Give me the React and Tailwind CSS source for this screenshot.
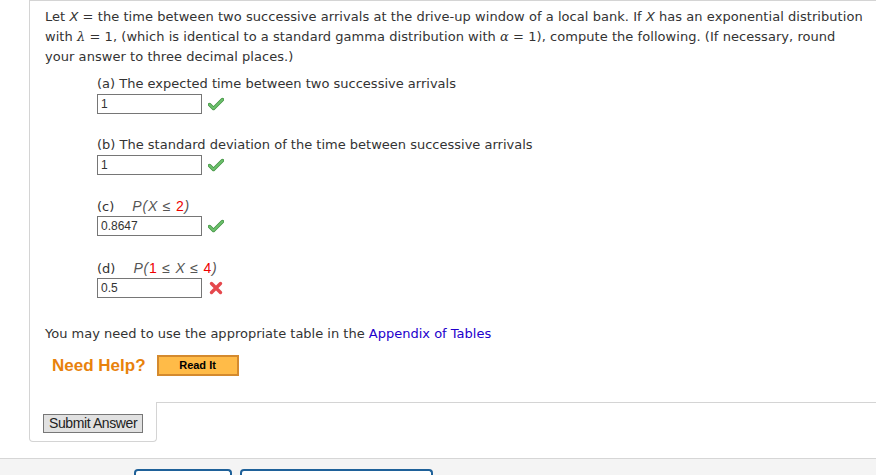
import React from 'react';

const Check = () => (
    <svg width="16" height="14" viewBox="0 0 16 14" className="ml-[6px]">
        <path d="M1.5 7.5 L5.5 11.5 L14.5 2.5" fill="none" stroke="#3f8f3f" strokeWidth="3.4" strokeLinecap="round" strokeLinejoin="round" />
        <path d="M1.5 7.5 L5.5 11.5 L14.5 2.5" fill="none" stroke="#6cc06c" strokeWidth="2" strokeLinecap="round" strokeLinejoin="round" />
    </svg>
);

const Cross = () => (
    <svg width="14" height="14" viewBox="0 0 14 14" className="ml-[7px]">
        <path d="M2.5 2.5 L11.5 11.5 M11.5 2.5 L2.5 11.5" stroke="#e5484d" strokeWidth="3.4" strokeLinecap="round" />
    </svg>
);

const Answer = ({ value, ok }) => (
    <div className="flex items-center h-[20px]">
        <div className="w-[105px] h-[20px] border border-[#767676] bg-white px-[3px] text-[12px] leading-[18px] text-[#333] font-['Liberation_Sans',Arial,sans-serif]">
            {value}
        </div>
        {ok ? <Check /> : <Cross />}
    </div>
);

const Label = ({ children }) => (
    <div className="h-[20px] leading-[20px]">{children}</div>
);

const Prob = ({ children }) => (
    <span className="ml-[18px] italic font-['Liberation_Sans',Arial,sans-serif] text-[14px] tracking-[0.8px] text-[#555]">{children}</span>
);

export default function App() {
    return (
        <div className="w-[876px] h-[475px] bg-white flex flex-col overflow-hidden font-['DejaVu_Sans',Verdana,sans-serif] text-[13px] text-[#333]">
            <div className="flex flex-1">
                <div className="flex-1 flex flex-col pl-[29px]">
                    <div className="h-[402px] border-l border-t border-[#d4d4d4] pt-[6px] pl-[15px]">
                        <p className="leading-[20px] pr-[6px] tracking-[0.05px]">
                            Let <i>X</i> = the time between two successive arrivals at the drive-up window of a local bank. If <i>X</i> has an exponential distribution<br />
                            with <i className="font-['DejaVu_Serif',serif]">λ</i> = 1, (which is identical to a standard gamma distribution with <i className="font-['DejaVu_Serif',serif]">α</i> = 1), compute the following. (If necessary, round<br />
                            your answer to three decimal places.)
                        </p>
                        <div className="ml-[52px] mt-[7px] flex flex-col">
                            <Label>(a) The expected time between two successive arrivals</Label>
                            <Answer value="1" ok />
                            <div className="mt-[21px]"><Label>(b) The standard deviation of the time between successive arrivals</Label></div>
                            <Answer value="1" ok />
                            <div className="mt-[21px]"><Label>(c)<Prob>P(X ≤ <span className="not-italic text-[#e00]">2</span>)</Prob></Label></div>
                            <Answer value="0.8647" ok />
                            <div className="mt-[22px]"><Label>(d)<Prob>P(<span className="not-italic text-[#e00]">1</span> ≤ X ≤ <span className="not-italic text-[#e00]">4</span>)</Prob></Label></div>
                            <Answer value="0.5" ok={false} />
                        </div>
                        <p className="mt-[26px] leading-[20px]">
                            You may need to use the appropriate table in the <span className="text-[#2200cc]">Appendix of Tables</span>
                        </p>
                        <div className="mt-[9px] ml-[7px] flex items-center">
                            <span className="font-['Liberation_Sans',Arial,sans-serif] font-bold text-[17px] text-[#e8820c]">Need Help?</span>
                            <button className="ml-[11px] w-[82px] h-[21px] bg-[#ffbb48] border-2 border-[#d48a2e] font-['Liberation_Sans',Arial,sans-serif] font-bold text-[11px] text-black leading-[17px]">
                                Read It
                            </button>
                        </div>
                    </div>
                    <div className="flex h-[40px]">
                        <div className="w-[128px] border-l border-r border-b border-[#d4d4d4] rounded-b-[4px] pl-[13px] pt-[12px]">
                            <button className="h-[19px] px-[5px] bg-[#e1e1e1] border border-[#777] font-['Liberation_Sans',Arial,sans-serif] text-[14px] leading-[17px] text-[#222] tracking-[-0.4px]">
                                Submit Answer
                            </button>
                        </div>
                        <div className="flex-1 border-t border-[#d4d4d4]"></div>
                    </div>
                </div>
            </div>
            <div className="h-[17px] border-t border-[#d6d6d6] bg-[#f4f4f4] flex items-end pl-[134px] gap-[8px]">
                <div className="w-[98px] h-[6px] border-t-2 border-l-2 border-r-2 border-[#1f6199] rounded-t-[4px] bg-white"></div>
                <div className="w-[193px] h-[6px] border-t-2 border-l-2 border-r-2 border-[#1f6199] rounded-t-[4px] bg-white"></div>
            </div>
        </div>
    );
}
